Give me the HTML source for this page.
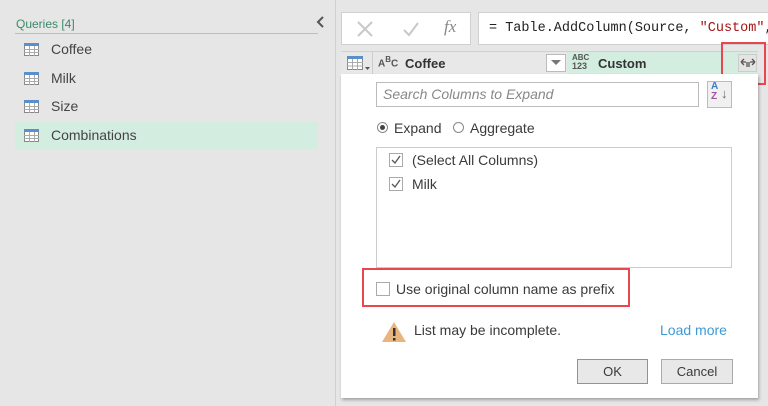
<!DOCTYPE html>
<html><head><style>
body{margin:0;width:768px;height:406px;background:#e6e6e6;font-family:"Liberation Sans",sans-serif;position:relative;overflow:hidden;color:#3a3a3a}
.a{position:absolute}
.item{position:absolute;left:15px;width:303px;height:27px;font-size:14px;line-height:27px;color:#444}
.item svg{position:absolute;left:9px;top:7px}
.item span{position:absolute;left:36px}
</style></head><body>
<div class="a" style="left:335px;top:0;width:1px;height:406px;background:#d0d0d0"></div>
<div class="a" style="left:16px;top:17px;font-size:12px;color:#3a8a6a">Queries [4]</div>
<div class="a" style="left:15px;top:33px;width:303px;height:1px;background:#bdbdbd"></div>
<svg class="a" style="left:314px;top:15px" width="12" height="14"><path d="M9 2 L4 7 L9 12" stroke="#555" stroke-width="2" fill="none"/></svg>
<div class="item" style="top:36px"><svg width="15" height="13"><rect x=".5" y=".5" width="14" height="12" fill="#fff" stroke="#888"/><rect x="0" y="0" width="15" height="3" fill="#5b8fc7"/><path d="M0 6.5h15M0 9.5h15M5.5 3v10M10.5 3v10" stroke="#aaa"/></svg><span>Coffee</span></div>
<div class="item" style="top:65px"><svg width="15" height="13"><rect x=".5" y=".5" width="14" height="12" fill="#fff" stroke="#888"/><rect x="0" y="0" width="15" height="3" fill="#5b8fc7"/><path d="M0 6.5h15M0 9.5h15M5.5 3v10M10.5 3v10" stroke="#aaa"/></svg><span>Milk</span></div>
<div class="item" style="top:93px"><svg width="15" height="13"><rect x=".5" y=".5" width="14" height="12" fill="#fff" stroke="#888"/><rect x="0" y="0" width="15" height="3" fill="#5b8fc7"/><path d="M0 6.5h15M0 9.5h15M5.5 3v10M10.5 3v10" stroke="#aaa"/></svg><span>Size</span></div>
<div class="item" style="top:122px;background:#d3eee0"><svg width="15" height="13"><rect x=".5" y=".5" width="14" height="12" fill="#fff" stroke="#888"/><rect x="0" y="0" width="15" height="3" fill="#5b8fc7"/><path d="M0 6.5h15M0 9.5h15M5.5 3v10M10.5 3v10" stroke="#aaa"/></svg><span>Combinations</span></div>

<div class="a" style="left:341px;top:12px;width:130px;height:33px;background:#fff;border:1px solid #d0d0d0;box-sizing:border-box"></div>
<svg class="a" style="left:355px;top:19px" width="20" height="20"><path d="M3 3L17 17M17 3L3 17" stroke="#c8c8c8" stroke-width="2"/></svg>
<svg class="a" style="left:401px;top:19px" width="20" height="20"><path d="M3 11L8 16L17 4" stroke="#c8c8c8" stroke-width="2" fill="none"/></svg>
<div class="a" style="left:444px;top:17px;font-family:'Liberation Serif',serif;font-style:italic;font-size:17px;color:#888">fx</div>
<div class="a" style="left:478px;top:12px;width:295px;height:33px;background:#fff;border:1px solid #d0d0d0;box-sizing:border-box;font-family:'Liberation Mono',monospace;font-size:13.5px;line-height:31px;padding-left:10px;white-space:nowrap;color:#222">= Table.AddColumn(Source, <span style="color:#a31515">"Custom"</span>,</div>

<div class="a" style="left:341px;top:51px;width:417px;height:23px;background:#e8e8e8;border-top:1px solid #d0d0d0"></div>
<svg class="a" style="left:347px;top:56px" width="26" height="16"><rect x=".5" y=".5" width="15" height="13" fill="#fff" stroke="#888"/><rect x="0" y="0" width="16" height="3" fill="#5b8fc7"/><path d="M0 6.5h16M0 10h16M5.5 3v11M10.5 3v11" stroke="#aaa"/><path d="M18 11h5l-2.5 3z" fill="#555"/></svg>
<div class="a" style="left:372px;top:52px;width:1px;height:22px;background:#ccc"></div>
<div class="a" style="left:378px;top:55px;font-size:10px;font-weight:bold;color:#555">A<sup style="font-size:8px">B</sup>C</div>
<div class="a" style="left:405px;top:56px;font-size:13px;font-weight:bold;color:#333">Coffee</div>
<div class="a" style="left:546px;top:54px;width:20px;height:18px;background:#fff;border:1px solid #bbb;box-sizing:border-box"></div>
<svg class="a" style="left:551px;top:60px" width="10" height="6"><path d="M0 0h10L5 5z" fill="#777"/></svg>
<div class="a" style="left:567px;top:52px;width:191px;height:22px;background:#d3eee0"></div>
<div class="a" style="left:572px;top:53px;font-size:8px;font-weight:bold;color:#555;line-height:9px">ABC<br><span style="font-size:9px">123</span></div>
<div class="a" style="left:598px;top:56px;font-size:13px;font-weight:bold;color:#333">Custom</div>
<div class="a" style="left:738px;top:54px;width:19px;height:18px;background:#e4e4e4;border:1px solid #ccc;box-sizing:border-box"></div>
<svg class="a" style="left:740px;top:58px" width="16" height="10"><path d="M1 4h5M1 4l3-3M1 4l3 3M15 4h-5M15 4l-3-3M15 4l-3 3M7 4v5M9 4v5" stroke="#555" stroke-width="1.3" fill="none"/></svg>
<div class="a" style="left:721px;top:42px;width:45px;height:43px;border:2px solid #e8474f;box-sizing:border-box"></div>

<div class="a" style="left:341px;top:74px;width:417px;height:324px;background:#fff;box-shadow:1px 2px 3px rgba(0,0,0,.3)"></div>
<div class="a" style="left:376px;top:82px;width:323px;height:25px;border:1px solid #bbb;box-sizing:border-box;font-size:14px;font-style:italic;color:#888;line-height:23px;padding-left:6px">Search Columns to Expand</div>
<div class="a" style="left:707px;top:81px;width:25px;height:27px;border:1px solid #bbb;background:#f0f0f0;box-sizing:border-box"></div>
<div class="a" style="left:711px;top:82px;font-size:10px;line-height:10px;font-weight:bold"><span style="color:#3a7bc8">A</span><br><span style="color:#a0529e">Z</span></div>
<div class="a" style="left:721px;top:86px;font-size:13px;color:#666">↓</div>
<div class="a" style="left:377px;top:122px;width:11px;height:11px;border:1px solid #888;border-radius:50%;box-sizing:border-box"></div>
<div class="a" style="left:380px;top:125px;width:5px;height:5px;background:#444;border-radius:50%"></div>
<div class="a" style="left:394px;top:120px;font-size:14px">Expand</div>
<div class="a" style="left:453px;top:122px;width:11px;height:11px;border:1px solid #888;border-radius:50%;box-sizing:border-box"></div>
<div class="a" style="left:470px;top:120px;font-size:14px">Aggregate</div>
<div class="a" style="left:376px;top:147px;width:356px;height:121px;border:1px solid #ccc;box-sizing:border-box"></div>
<div class="a" style="left:389px;top:153px;width:14px;height:14px;border:1px solid #aaa;box-sizing:border-box"></div>
<svg class="a" style="left:390px;top:154px" width="12" height="12"><path d="M2 6l3 3l5-7" stroke="#555" stroke-width="1.3" fill="none"/></svg>
<div class="a" style="left:412px;top:152px;font-size:14px">(Select All Columns)</div>
<div class="a" style="left:389px;top:177px;width:14px;height:14px;border:1px solid #aaa;box-sizing:border-box"></div>
<svg class="a" style="left:390px;top:178px" width="12" height="12"><path d="M2 6l3 3l5-7" stroke="#555" stroke-width="1.3" fill="none"/></svg>
<div class="a" style="left:412px;top:176px;font-size:14px">Milk</div>
<div class="a" style="left:362px;top:268px;width:268px;height:39px;border:2px solid #e8474f;box-sizing:border-box"></div>
<div class="a" style="left:376px;top:282px;width:14px;height:14px;border:1px solid #aaa;box-sizing:border-box"></div>
<div class="a" style="left:396px;top:281px;font-size:14px">Use original column name as prefix</div>
<svg class="a" style="left:381px;top:321px" width="26" height="22"><path d="M13 1L25 21H1z" fill="#e8b57e"/><rect x="12" y="7" width="2.5" height="8" fill="#333"/><rect x="12" y="17" width="2.5" height="2.5" fill="#333"/></svg>
<div class="a" style="left:414px;top:322px;font-size:14px">List may be incomplete.</div>
<div class="a" style="left:660px;top:322px;font-size:14px;color:#3c9ad6">Load more</div>
<div class="a" style="left:577px;top:359px;width:71px;height:25px;background:#e8e8e8;border:1px solid #5aa0dc;box-sizing:border-box;text-align:center;font-size:13px;line-height:23px">OK</div>
<div class="a" style="left:661px;top:359px;width:72px;height:25px;background:#e8e8e8;border:1px solid #aaa;box-sizing:border-box;text-align:center;font-size:13px;line-height:23px">Cancel</div>
</body></html>
